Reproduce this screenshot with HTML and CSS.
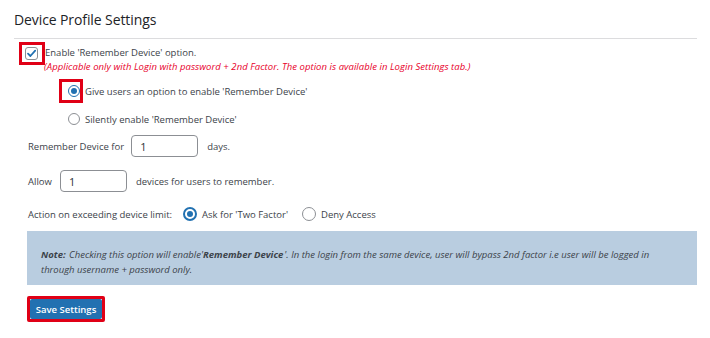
FILE: index.html
```html
<!DOCTYPE html>
<html lang="en">
	<head>
		<meta charset="UTF-8" />
		<meta name="viewport" content="width=device-width, initial-scale=1.0" />
		<title>Device Profile Settings</title>
		<link rel="stylesheet" href="styles.css">
	</head>
	<body>
		<div class="panel">
			<h2 class="title">Device Profile Settings</h2>

			<div class="enable-row">
				<span class="hl hl-check">
					<span class="checkbox">
						<svg width="11" height="11" viewBox="0 0 11 11"><path d="M2 5.6 L4.4 8 L9.2 2.6" fill="none" stroke="#2271b1" stroke-width="1.8" stroke-linecap="round" stroke-linejoin="round"/></svg>
					</span>
				</span>
				<div class="enable-text">
					<div>Enable 'Remember Device' option.</div>
					<div class="warn">(Applicable only with <i>Login with password + 2nd Factor</i>. The option is available in Login Settings tab.)</div>
				</div>
			</div>

			<div class="choice-list">
				<div class="choice">
					<span class="hl hl-radio"><span class="radio checked"></span></span>
					<span>Give users an option to enable 'Remember Device'</span>
				</div>
				<div class="choice">
					<span class="radio-slot"><span class="radio"></span></span>
					<span>Silently enable 'Remember Device'</span>
				</div>
			</div>

			<div class="field-row row-days">
				<span>Remember Device for</span>
				<input class="num-input" type="text" value="1" />
				<span>days.</span>
			</div>

			<div class="field-row row-allow">
				<span>Allow</span>
				<input class="num-input" type="text" value="1" />
				<span>devices for users to remember.</span>
			</div>

			<div class="field-row row-action">
				<span>Action on exceeding device limit:</span>
				<span class="opt"><span class="radio checked big"></span>Ask for 'Two Factor'</span>
				<span class="opt"><span class="radio big"></span>Deny Access</span>
			</div>

			<div class="note">
				<b>Note:</b> Checking this option will enable'<b>Remember Device</b>'. In the login from the same device, user will bypass 2nd factor i.e user will be logged in through username + password only.
			</div>

			<div class="hl hl-btn"><button class="save-btn" type="button">Save Settings</button></div>
		</div>
	</body>
</html>
```

FILE: styles.css
```css
body {
	margin: 0;
	background: #fff;
	font-family: "Open Sans", "Noto Sans", Arial, sans-serif;
	font-size: 9.5px;
	color: #3c434a;
}
.panel {
	padding: 0 13px 0 14px;
}
.title {
	margin: 0;
	padding-top: 10px;
	height: 28px;
	border-bottom: 1px solid #dcdcde;
	font-size: 14px;
	font-weight: 400;
	line-height: 20px;
	color: #1d2327;
	letter-spacing: -0.1px;
}
.hl {
	display: inline-flex;
	align-items: center;
	justify-content: center;
	border: 3px solid #e00016;
	box-sizing: border-box;
	flex-shrink: 0;
}
.enable-row {
	display: flex;
	margin: 3px 0 0 5px;
}
.hl-check {
	width: 26px;
	height: 23px;
	padding-right: 1px;
}
.checkbox {
	display: inline-flex;
	align-items: center;
	justify-content: center;
	width: 13px;
	height: 13px;
	box-sizing: border-box;
	border: 1px solid #8c8f94;
	border-radius: 3px;
	background: #fff;
}
.enable-text {
	line-height: 14px;
	padding-top: 4px;
}
.warn {
	color: #e8002a;
	margin-left: -1px;
	font-style: italic;
	letter-spacing: 0.05px;
}
.choice-list {
	margin: 5px 0 0 45px;
}
.choice {
	display: flex;
	align-items: center;
	height: 24px;
	margin-bottom: 4px;
}
.hl-radio,
.radio-slot {
	width: 24px;
	height: 24px;
	margin-right: 2px;
}
.hl-radio {
	padding-left: 5px;
}
.radio-slot {
	display: inline-flex;
	align-items: center;
	justify-content: center;
	padding-left: 5px;
	box-sizing: border-box;
}
.radio {
	display: inline-block;
	width: 12px;
	height: 12px;
	box-sizing: border-box;
	border: 1px solid #8c8f94;
	border-radius: 50%;
	background: #fff;
	position: relative;
}
.radio.big {
	width: 14px;
	height: 14px;
	margin-right: 5px;
}
.radio.checked {
	border-color: #2271b1;
}
.radio.checked::after {
	content: "";
	position: absolute;
	left: 50%;
	top: 50%;
	width: 6px;
	height: 6px;
	margin: -3px 0 0 -3px;
	border-radius: 50%;
	background: #2271b1;
}
.radio.big.checked {
	border-width: 2px;
}
.field-row {
	display: flex;
	align-items: center;
	margin-left: 14px;
	height: 22px;
}
.row-days {
	margin-top: 2px;
}
.row-allow {
	margin-top: 13px;
}
.row-action {
	margin-top: 11px;
}
.num-input {
	width: 67px;
	height: 22px;
	box-sizing: border-box;
	margin: 0 9px 0 7px;
	padding: 0 0 0 8px;
	border: 1px solid #8c8f94;
	border-radius: 4px;
	font: inherit;
	font-size: 11px;
	color: #2c3338;
	background: #fff;
}
.row-allow .num-input {
	margin-left: 8px;
}
.opt {
	display: inline-flex;
	align-items: center;
	margin-left: 11px;
}
.opt + .opt {
	margin-left: 14px;
}
.note {
	margin: 6px 0 0 13px;
	padding: 16px 14px 8px 14px;
	background: #b9cde0;
	font-style: italic;
	line-height: 15px;
	color: #3c434a;
	font-size: 9.5px;
}
.note b {
	padding-right: 1px;
}
.hl-btn {
	display: flex;
	width: fit-content;
	margin: 11px 0 0 13px;
	border-radius: 2px;
}
.save-btn {
	width: 72px;
	height: 20px;
	border: none;
	border-radius: 2px;
	background: #2271b1;
	color: #fff;
	font-family: inherit;
	font-size: 9.5px;
	font-weight: 600;
	padding: 0;
	cursor: pointer;
}
```
